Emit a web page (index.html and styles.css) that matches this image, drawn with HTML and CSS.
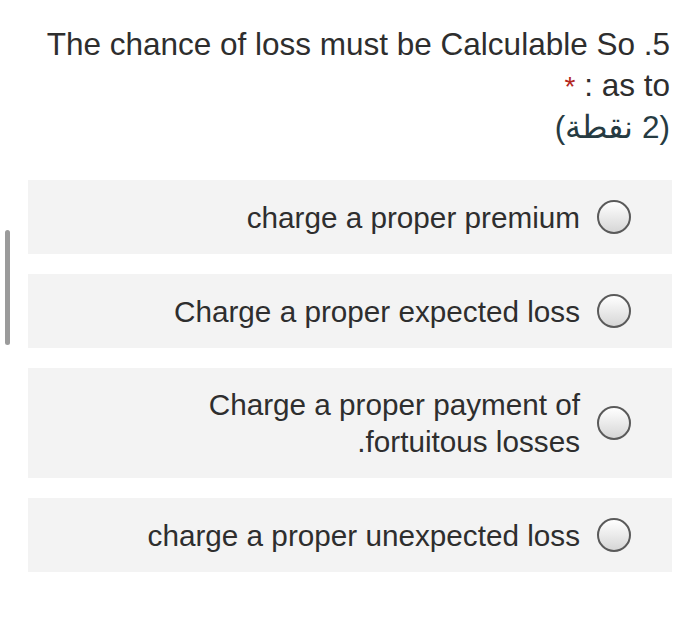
FILE: index.html
```html
<!DOCTYPE html>
<html lang="ar">
<head>
<meta charset="utf-8">
<link rel="stylesheet" href="styles.css">
</head>
<body>
<div class="scrollbar"></div>
<main class="page">
  <header class="question">
    <div class="q-line">The chance of loss must be Calculable So .5</div>
    <div class="q-line"><span class="req">*</span> : as to</div>
    <div class="q-line points" dir="rtl">(2 نقطة)</div>
  </header>
  <div class="options">
    <label class="option"><span class="opt-text">charge a proper premium</span><span class="radio"></span></label>
    <label class="option"><span class="opt-text">Charge a proper expected loss</span><span class="radio"></span></label>
    <label class="option tall"><span class="opt-text">Charge a proper payment of<br>.fortuitous losses</span><span class="radio"></span></label>
    <label class="option"><span class="opt-text">charge a proper unexpected loss</span><span class="radio"></span></label>
  </div>
</main>
</body>
</html>
```
FILE: styles.css
```css
html, body {
  margin: 0;
  padding: 0;
  background: #fff;
}
body {
  font-family: "Liberation Sans", Arial, sans-serif;
  color: #2e2e2e;
  position: relative;
  width: 700px;
  height: 632px;
  overflow: hidden;
}
.scrollbar {
  position: absolute;
  left: 5px;
  top: 230px;
  width: 5px;
  height: 115px;
  border-radius: 3px;
  background: #9b9b9b;
}
.page {
  padding: 24px 28px 0 28px;
}
.question {
  text-align: right;
  padding-right: 2px;
  font-size: 31.5px;
  line-height: 41px;
}
.q-line {
  white-space: nowrap;
}
.req {
  color: #b3261e;
  font-size: 28px;
}
.points {
  text-align: right;
  direction: rtl;
  color: #263b42;
}
.options {
  margin-top: 32px;
  display: flex;
  flex-direction: column;
  gap: 20px;
}
.option {
  display: flex;
  justify-content: flex-end;
  align-items: center;
  gap: 17px;
  height: 74px;
  padding-right: 41px;
  background: #f3f3f3;
}
.option.tall {
  height: 110px;
}
.opt-text {
  font-size: 29.7px;
  line-height: 37px;
  text-align: right;
  white-space: nowrap;
}
.radio {
  flex: none;
  width: 30px;
  height: 30px;
  border: 2px solid #5a5a5a;
  border-radius: 50%;
  background: linear-gradient(#ffffff, #d6d6d6);
}
```
